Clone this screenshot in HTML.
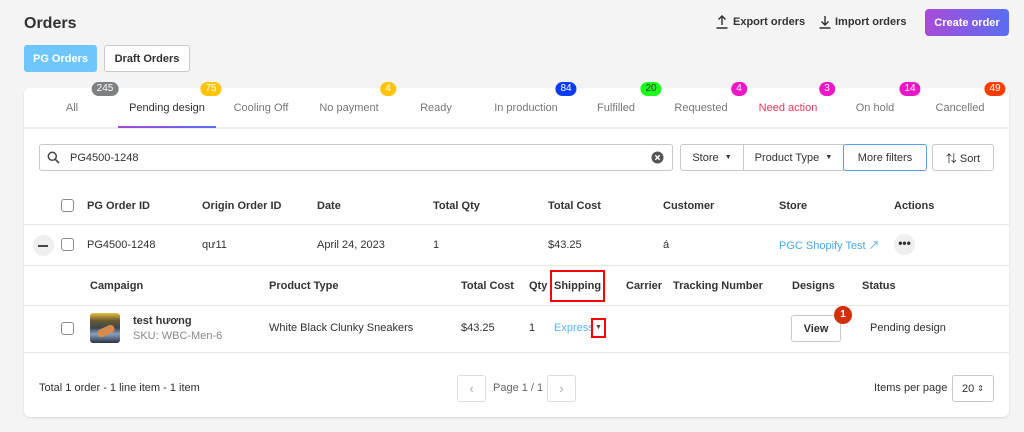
<!DOCTYPE html>
<html><head><meta charset="utf-8"><style>
*{box-sizing:border-box;margin:0;padding:0}
body{width:1024px;height:432px;background:#f4f4f4;font-family:"Liberation Sans","Noto Sans CJK SC",sans-serif;font-size:11px;color:#303030;position:relative;overflow:hidden}
.a{position:absolute;white-space:nowrap}
.t{transform:translateY(-50%)}
.c{transform:translate(-50%,-50%)}
.btn{position:absolute;border:1px solid #c9c9c9;background:#fff;border-radius:3px;display:flex;align-items:center;justify-content:center;font-size:11px;color:#303030}
.badge{position:absolute;height:14px;border-radius:7px;color:#fff;font-size:10px;line-height:14px;text-align:center;transform:translateX(-50%);padding:0 5px;min-width:14px}
.tab{position:absolute;top:108px;color:#777;transform:translate(-50%,-50%);font-size:11px}
.hr{position:absolute;left:24px;width:985px;height:1px;background:#e6e6e6}
.cb{position:absolute;width:13px;height:13px;border:1.5px solid #8a8a8a;border-radius:3px;background:#fff}
.h{font-weight:bold;color:#333}
</style></head><body>
<div class="a t" style="left:24px;top:24px;font-size:16px;font-weight:bold;color:#303030">Orders</div>
<div class="btn" style="left:24px;top:45px;width:73px;height:27px;background:#6fc6fb;border-color:#6fc6fb;color:#fff;font-weight:bold">PG Orders</div>
<div class="btn" style="left:104px;top:45px;width:86px;height:27px;font-weight:bold">Draft Orders</div>

<svg class="a" style="left:715px;top:14px" width="14" height="16" viewBox="0 0 14 16"><path d="M7 11V2M3.5 5.5L7 2l3.5 3.5M1.5 14h11" stroke="#303030" stroke-width="1.4" fill="none"/></svg>
<div class="a t h" style="left:733px;top:22px">Export orders</div>
<svg class="a" style="left:818px;top:14px" width="14" height="16" viewBox="0 0 14 16"><path d="M7 2v9M3.5 7.5L7 11l3.5-3.5M1.5 14h11" stroke="#303030" stroke-width="1.4" fill="none"/></svg>
<div class="a t h" style="left:835px;top:22px">Import orders</div>
<div class="btn" style="left:925px;top:9px;width:84px;height:27px;border:none;background:linear-gradient(90deg,#a94bd8,#5a6ef2);color:#fff;font-weight:bold;border-radius:4px">Create order</div>

<div class="a" style="left:24px;top:88px;width:985px;height:329px;background:#fff;border-radius:6px;box-shadow:0 1px 2px rgba(0,0,0,.12)"></div>

<div class="tab" style="left:72px">All</div>
<div class="tab" style="left:167px;color:#303030">Pending design</div>
<div class="tab" style="left:261px">Cooling Off</div>
<div class="tab" style="left:349px">No payment</div>
<div class="tab" style="left:436px">Ready</div>
<div class="tab" style="left:526px">In production</div>
<div class="tab" style="left:616px">Fulfilled</div>
<div class="tab" style="left:701px">Requested</div>
<div class="tab" style="left:788px;color:#e03c5c">Need action</div>
<div class="tab" style="left:875px">On hold</div>
<div class="tab" style="left:960px">Cancelled</div>
<div class="badge" style="left:105px;top:82px;background:#7d8184">245</div>
<div class="badge" style="left:211px;top:82px;background:#ffc400">75</div>
<div class="badge" style="left:388px;top:82px;background:#ffc400">4</div>
<div class="badge" style="left:566px;top:82px;background:#0a3cff">84</div>
<div class="badge" style="left:651px;top:82px;background:#1dff1d;color:#333">20</div>
<div class="badge" style="left:739px;top:82px;background:#ee17c8">4</div>
<div class="badge" style="left:827px;top:82px;background:#ee17c8">3</div>
<div class="badge" style="left:910px;top:82px;background:#ee17c8">14</div>
<div class="badge" style="left:995px;top:82px;background:#ff3d00">49</div>
<div class="hr" style="top:127px;height:2px;background:#efefef"></div>
<div class="a" style="left:118px;top:126px;width:98px;height:2px;background:linear-gradient(90deg,#a64ad8,#5a6ef2)"></div>

<div class="btn" style="left:39px;top:144px;width:634px;height:27px;justify-content:flex-start;padding-left:30px">PG4500-1248</div>
<svg class="a" style="left:47px;top:151px" width="13" height="13" viewBox="0 0 13 13"><circle cx="5.3" cy="5.3" r="4" stroke="#444" stroke-width="1.5" fill="none"/><path d="M8.3 8.3L12 12" stroke="#444" stroke-width="1.6"/></svg>
<svg class="a" style="left:651px;top:151px" width="13" height="13" viewBox="0 0 13 13"><circle cx="6.5" cy="6.5" r="6" fill="#555"/><path d="M4.3 4.3l4.4 4.4M8.7 4.3l-4.4 4.4" stroke="#fff" stroke-width="1.4"/></svg>
<div class="btn" style="left:680px;top:144px;width:64px;height:27px;border-radius:3px 0 0 3px">Store&nbsp;&nbsp;<span style="font-size:7px">▼</span></div>
<div class="btn" style="left:743px;top:144px;width:101px;height:27px;border-radius:0">Product Type&nbsp;&nbsp;<span style="font-size:7px">▼</span></div>
<div class="btn" style="left:843px;top:144px;width:84px;height:27px;border:1.5px solid #5b9ef0;border-radius:3px">More filters</div>
<div class="btn" style="left:932px;top:144px;width:62px;height:27px">⇅&nbsp;Sort</div>

<div class="cb" style="left:61px;top:199px"></div>
<div class="a t h" style="left:87px;top:206px">PG Order ID</div>
<div class="a t h" style="left:202px;top:206px">Origin Order ID</div>
<div class="a t h" style="left:317px;top:206px">Date</div>
<div class="a t h" style="left:433px;top:206px">Total Qty</div>
<div class="a t h" style="left:548px;top:206px">Total Cost</div>
<div class="a t h" style="left:663px;top:206px">Customer</div>
<div class="a t h" style="left:779px;top:206px">Store</div>
<div class="a t h" style="left:894px;top:206px">Actions</div>
<div class="hr" style="top:224px"></div>

<div class="a" style="left:33px;top:235px;width:21px;height:21px;border-radius:50%;background:#efefef"></div>
<div class="a" style="left:38px;top:245px;width:10px;height:1.5px;background:#444"></div>
<div class="cb" style="left:61px;top:238px"></div>
<div class="a t" style="left:87px;top:245px">PG4500-1248</div>
<div class="a t" style="left:202px;top:245px">qư11</div>
<div class="a t" style="left:317px;top:245px">April 24, 2023</div>
<div class="a t" style="left:433px;top:245px">1</div>
<div class="a t" style="left:548px;top:245px">$43.25</div>
<div class="a t" style="left:663px;top:245px">á</div>
<div class="a t" style="left:779px;top:245px;color:#4aa8f0">PGC Shopify Test ↗</div>
<div class="a" style="left:894px;top:234px;width:21px;height:21px;border-radius:50%;background:#efefef;text-align:center;line-height:18px;font-weight:bold;font-size:12px">•••</div>
<div class="hr" style="top:265px"></div>

<div class="a t h" style="left:90px;top:286px">Campaign</div>
<div class="a t h" style="left:269px;top:286px">Product Type</div>
<div class="a t h" style="left:461px;top:286px">Total Cost</div>
<div class="a t h" style="left:529px;top:286px">Qty</div>
<div class="a t h" style="left:554px;top:286px">Shipping</div>
<div class="a t h" style="left:626px;top:286px">Carrier</div>
<div class="a t h" style="left:673px;top:286px">Tracking Number</div>
<div class="a t h" style="left:792px;top:286px">Designs</div>
<div class="a t h" style="left:862px;top:286px">Status</div>
<div class="a" style="left:550px;top:270px;width:55px;height:32px;border:2px solid #f00"></div>
<div class="hr" style="top:305px"></div>

<div class="cb" style="left:61px;top:322px"></div>
<div class="a" style="left:90px;top:313px;width:30px;height:30px;border-radius:3px;background:linear-gradient(180deg,#e8c040 0%,#6a5a30 25%,#3a4550 50%,#8aa0c0 70%,#2a3340 100%)"></div>
<div class="a" style="left:97px;top:327px;width:18px;height:8px;border-radius:4px;background:#d88a4a;transform:rotate(-25deg)"></div>
<div class="a t h" style="left:133px;top:321px">test hương</div>
<div class="a t" style="left:133px;top:336px;color:#888">SKU: WBC-Men-6</div>
<div class="a t" style="left:269px;top:328px">White Black Clunky Sneakers</div>
<div class="a t" style="left:461px;top:328px">$43.25</div>
<div class="a t" style="left:529px;top:328px">1</div>
<div class="a t" style="left:554px;top:328px;color:#5ab5f5">Express</div>
<div class="a" style="left:591px;top:318px;width:15px;height:20px;border:2px solid #f00;text-align:center;font-size:7px;line-height:15px;color:#444">▼</div>
<div class="btn" style="left:791px;top:315px;width:50px;height:27px;font-weight:bold">View</div>
<div class="a" style="left:834px;top:306px;width:18px;height:18px;border-radius:50%;background:#d0300a;color:#fff;font-size:10px;font-weight:bold;text-align:center;line-height:18px">1</div>
<div class="a t" style="left:870px;top:328px">Pending design</div>
<div class="hr" style="top:352px"></div>

<div class="a t" style="left:39px;top:388px">Total 1 order - 1 line item - 1 item</div>
<div class="btn" style="left:457px;top:375px;width:29px;height:27px;border-color:#ddd;color:#aaa;font-size:13px">‹</div>
<div class="a t" style="left:493px;top:388px;color:#666">Page 1 / 1</div>
<div class="btn" style="left:547px;top:375px;width:29px;height:27px;border-color:#ddd;color:#aaa;font-size:13px">›</div>
<div class="a t" style="left:874px;top:388px">Items per page</div>
<div class="btn" style="left:952px;top:375px;width:42px;height:27px">20&nbsp;<span style="font-size:8px">⇕</span></div>
</body></html>
